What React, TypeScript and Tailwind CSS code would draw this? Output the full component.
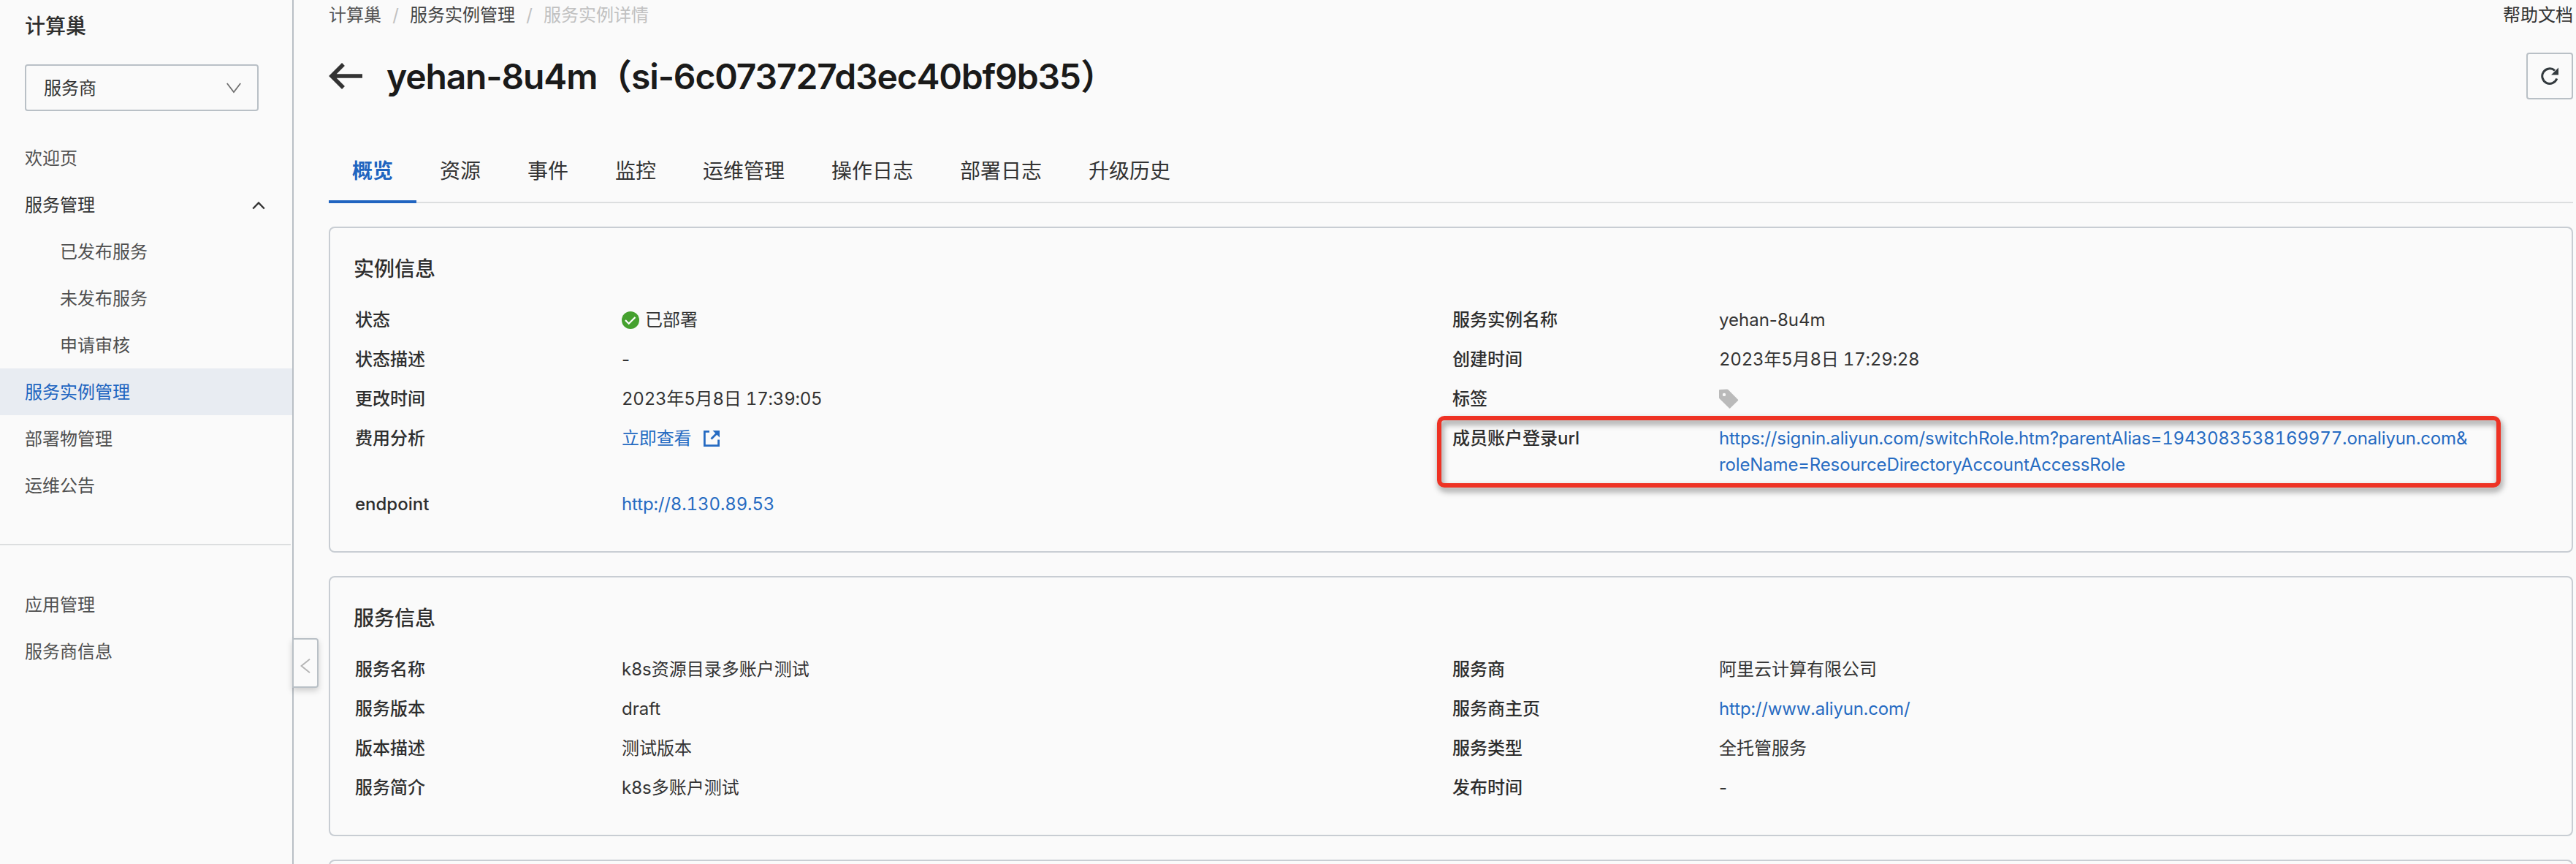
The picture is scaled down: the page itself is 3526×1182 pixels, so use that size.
import React, { useState } from 'react';
import { clsx } from 'clsx';

interface MenuItem {
  label: string;
  nested?: boolean;
  expanded?: boolean;
}

interface Field {
  label: string;
  value: React.ReactNode;
}

const menu: MenuItem[] = [
  { label: '欢迎页' },
  { label: '服务管理', expanded: true },
  { label: '已发布服务', nested: true },
  { label: '未发布服务', nested: true },
  { label: '申请审核', nested: true },
  { label: '服务实例管理' },
  { label: '部署物管理' },
  { label: '运维公告' },
];

const extraMenu: MenuItem[] = [{ label: '应用管理' }, { label: '服务商信息' }];

const tabs = ['概览', '资源', '事件', '监控', '运维管理', '操作日志', '部署日志', '升级历史'];

function CheckIcon() {
  return (
    <svg className="size-6 shrink-0" viewBox="0 0 24 24" fill="none">
      <circle cx="12" cy="12" r="12" fill="#45a12f" />
      <path d="m5 12 4.700 4.700L18.500 8" stroke="#fff" strokeWidth="2.2" />
    </svg>
  );
}

function ExternalIcon() {
  return (
    <svg className="h-[22px] w-[22px] shrink-0" viewBox="0 0 22 22" fill="none" stroke="currentColor" strokeWidth="2.8">
      <path d="M8 1.400H1.400v19.200h19.200V12.500" />
      <path d="m10.500 11.500 7.500-7.500" />
      <path d="M12.500 0H22v9.500z" fill="currentColor" stroke="none" />
    </svg>
  );
}

function TagIcon() {
  return (
    <svg className="h-7 w-[27px]" viewBox="0 0 27 28" fill="#bababa">
      <path
        fillRule="evenodd"
        d="M0 2.200Q0 1.200 1 1.100L10.800.5Q11.700.4 12.400 1.100L26 14.800Q26.500 15.400 26 16L15.200 26.500Q14.600 27 14 26.500L.5 13.200Q0 12.700 0 12ZM7 5.700a2.200 2.200 0 1 0 0 4.400 2.200 2.200 0 0 0 0-4.400Z"
      />
    </svg>
  );
}

function Link({ children }: { children: React.ReactNode }) {
  return (
    <a href="#" className="tracking-[-0.13px] text-[#266bc2] tabular-nums">
      {children}
    </a>
  );
}

function Time({ children }: { children: React.ReactNode }) {
  return <span className="tracking-[-0.2px] tabular-nums">{children}</span>;
}

function Row({ label, value }: Field) {
  return (
    <div className="flex pb-[18px] leading-9">
      <dt className="w-[365px] shrink-0 font-medium text-[#2e2e2e]">{label}</dt>
      <dd className="text-[#333]">{value}</dd>
    </div>
  );
}

function Card({ title, fields, children }: { title: string; fields: Field[]; children?: React.ReactNode }) {
  return (
    <section className="relative rounded-lg border-2 border-[#c8cdd3] pt-9 pr-[30px] pb-7 pl-8">
      <h2 className="text-[28px] leading-10 font-medium text-[#2e2e2e]">{title}</h2>
      <dl className="mt-8 ml-0.5 grid grid-cols-2">
        {fields.map((f) => (
          <Row key={f.label} {...f} />
        ))}
      </dl>
      {children}
    </section>
  );
}

const instanceFields: Field[] = [
  {
    label: '状态',
    value: (
      <span className="flex items-center gap-2">
        <CheckIcon />
        已部署
      </span>
    ),
  },
  { label: '服务实例名称', value: 'yehan-8u4m' },
  { label: '状态描述', value: '-' },
  { label: '创建时间', value: <Time>2023年5月8日 17:29:28</Time> },
  { label: '更改时间', value: <Time>2023年5月8日 17:39:05</Time> },
  {
    label: '标签',
    value: (
      <span className="flex h-9 items-center">
        <TagIcon />
      </span>
    ),
  },
  {
    label: '费用分析',
    value: (
      <Link>
        <span className="flex items-center gap-[17px]">
          立即查看
          <ExternalIcon />
        </span>
      </Link>
    ),
  },
  {
    label: '成员账户登录url',
    value: (
      <Link>
        https://signin.aliyun.com/switchRole.htm?parentAlias=1943083538169977.onaliyun.com&
        <br />
        roleName=ResourceDirectoryAccountAccessRole
      </Link>
    ),
  },
  { label: 'endpoint', value: <Link>http://8.130.89.53</Link> },
];

const serviceFields: Field[] = [
  { label: '服务名称', value: 'k8s资源目录多账户测试' },
  { label: '服务商', value: '阿里云计算有限公司' },
  { label: '服务版本', value: 'draft' },
  { label: '服务商主页', value: <Link>http://www.aliyun.com/</Link> },
  { label: '版本描述', value: '测试版本' },
  { label: '服务类型', value: '全托管服务' },
  { label: '服务简介', value: 'k8s多账户测试' },
  { label: '发布时间', value: '-' },
];

function Sidebar() {
  const [active, setActive] = useState('服务实例管理');

  const renderItem = (item: MenuItem) => (
    <li
      key={item.label}
      onClick={() => setActive(item.label)}
      className={clsx(
        'flex h-16 cursor-pointer items-center justify-between pt-0.5 pr-[37px]',
        item.nested ? 'pl-[82px]' : 'pl-[34px]',
        active === item.label ? 'bg-[#e8ecf2] text-[#2064c0]' : item.expanded ? 'text-[#333]' : 'text-[#505050]',
      )}
    >
      {item.label}
      {item.expanded && (
        <svg className="h-3 w-[18px]" viewBox="0 0 18 12" fill="none" stroke="#333" strokeWidth="2.4">
          <path d="M1.200 10.500 9 2.500l7.800 8" />
        </svg>
      )}
    </li>
  );

  return (
    <aside className="relative w-[402px] shrink-0 border-r-2 border-[#b9bfc5]">
      <h1 className="pt-4 pl-[34px] text-[28px] leading-10 font-medium text-[#2e2e2e]">计算巢</h1>
      <button className="mt-8 ml-[34px] flex h-16 w-80 items-center justify-between rounded-sm border-2 border-[#b9c0c6] pt-0.5 pr-[22px] pl-6 text-[#333]">
        服务商
        <svg className="h-4 w-5" viewBox="0 0 20 16" fill="none" stroke="#707070" strokeWidth="1.8">
          <path d="m.8 1 9.200 12L19.200 1" />
        </svg>
      </button>
      <ul className="mt-8">{menu.map(renderItem)}</ul>
      <hr className="mt-12 mr-0.5 border-t-2 border-[#dcdedf]" />
      <ul className="mt-[49px]">{extraMenu.map(renderItem)}</ul>

      {/* Collapse handle hanging off the sidebar edge */}
      <button className="absolute top-[873px] left-[400px] flex h-[68px] w-9 items-center justify-center rounded-r-sm border-2 border-[#b9c0c6] bg-[#fafafa] shadow-[0_4px_8px_rgba(0,0,0,0.18)]">
        <svg className="mt-2 h-5 w-[14px]" viewBox="0 0 14 20" fill="none" stroke="#b5b5b5" strokeWidth="2">
          <path d="M13 .8 1.500 10 13 19.200" />
        </svg>
      </button>
    </aside>
  );
}

export default function App() {
  const [tab, setTab] = useState('概览');

  return (
    <div className="flex h-[1182px] overflow-hidden bg-[#fafafa] font-['Inter','Noto_Sans_CJK_SC',sans-serif] text-2xl">
      <Sidebar />
      <main className="min-w-0 flex-1 pr-1 pl-12">
        <div className="flex h-[42px] items-center justify-between text-[#333]">
          <nav className="flex items-center text-[#555]">
            <span>计算巢</span>
            <span className="w-[39px] text-center text-[#c1c1c1]">/</span>
            <span className="text-[#444]">服务实例管理</span>
            <span className="w-[39px] text-center text-[#c1c1c1]">/</span>
            <span className="text-[#c1c1c1]">服务实例详情</span>
          </nav>
          <span>帮助文档</span>
        </div>

        <header className="mt-[30px] flex h-16 items-center">
          <svg className="h-9 w-[46px]" viewBox="0 0 46 36" fill="none" stroke="#333" strokeWidth="5.5">
            <path d="M20 2 4 18l16 16M3 18h43" />
          </svg>
          <h1 className="ml-[33px] pt-0.5 text-5xl font-semibold tracking-[-1.15px] whitespace-nowrap text-[#1a1a1a]">
            yehan-8u4m（si-6c073727d3ec40bf9b35）
          </h1>
          <button className="ml-auto flex size-16 items-center justify-center rounded-sm border-2 border-[#b9c0c6]">
            <svg className="size-6" viewBox="0 0 24 24" fill="none">
              <path d="M21.800 15.500A10.300 10.300 0 1 1 19 4.500" stroke="#333a3e" strokeWidth="3" />
              <path d="M24 .5V10.500H14z" fill="#333a3e" />
            </svg>
          </button>
        </header>

        <div className="mt-[54px] flex h-[88px] border-b-2 border-[#dcdedf] text-[28px]">
          {tabs.map((t) => (
            <button
              key={t}
              onClick={() => setTab(t)}
              className={clsx(
                'h-[88px] border-b-4 px-8 pt-1.5',
                t === tab ? 'border-[#2064c0] font-bold text-[#2064c0]' : 'border-transparent text-[#333]',
              )}
            >
              {t}
            </button>
          ))}
        </div>

        <div className="mt-8 flex flex-col gap-8">
          <Card title="实例信息" fields={instanceFields}>
            {/* Highlight around the login url */}
            <div className="absolute top-[257px] left-[1515px] h-[98px] w-[1456px] rounded-[10px] border-6 border-[#ee3224] drop-shadow-[2px_5px_4px_rgba(0,0,0,0.45)]" />
          </Card>
          <Card title="服务信息" fields={serviceFields} />
          <Card title="" fields={[]} />
        </div>
      </main>
    </div>
  );
}
